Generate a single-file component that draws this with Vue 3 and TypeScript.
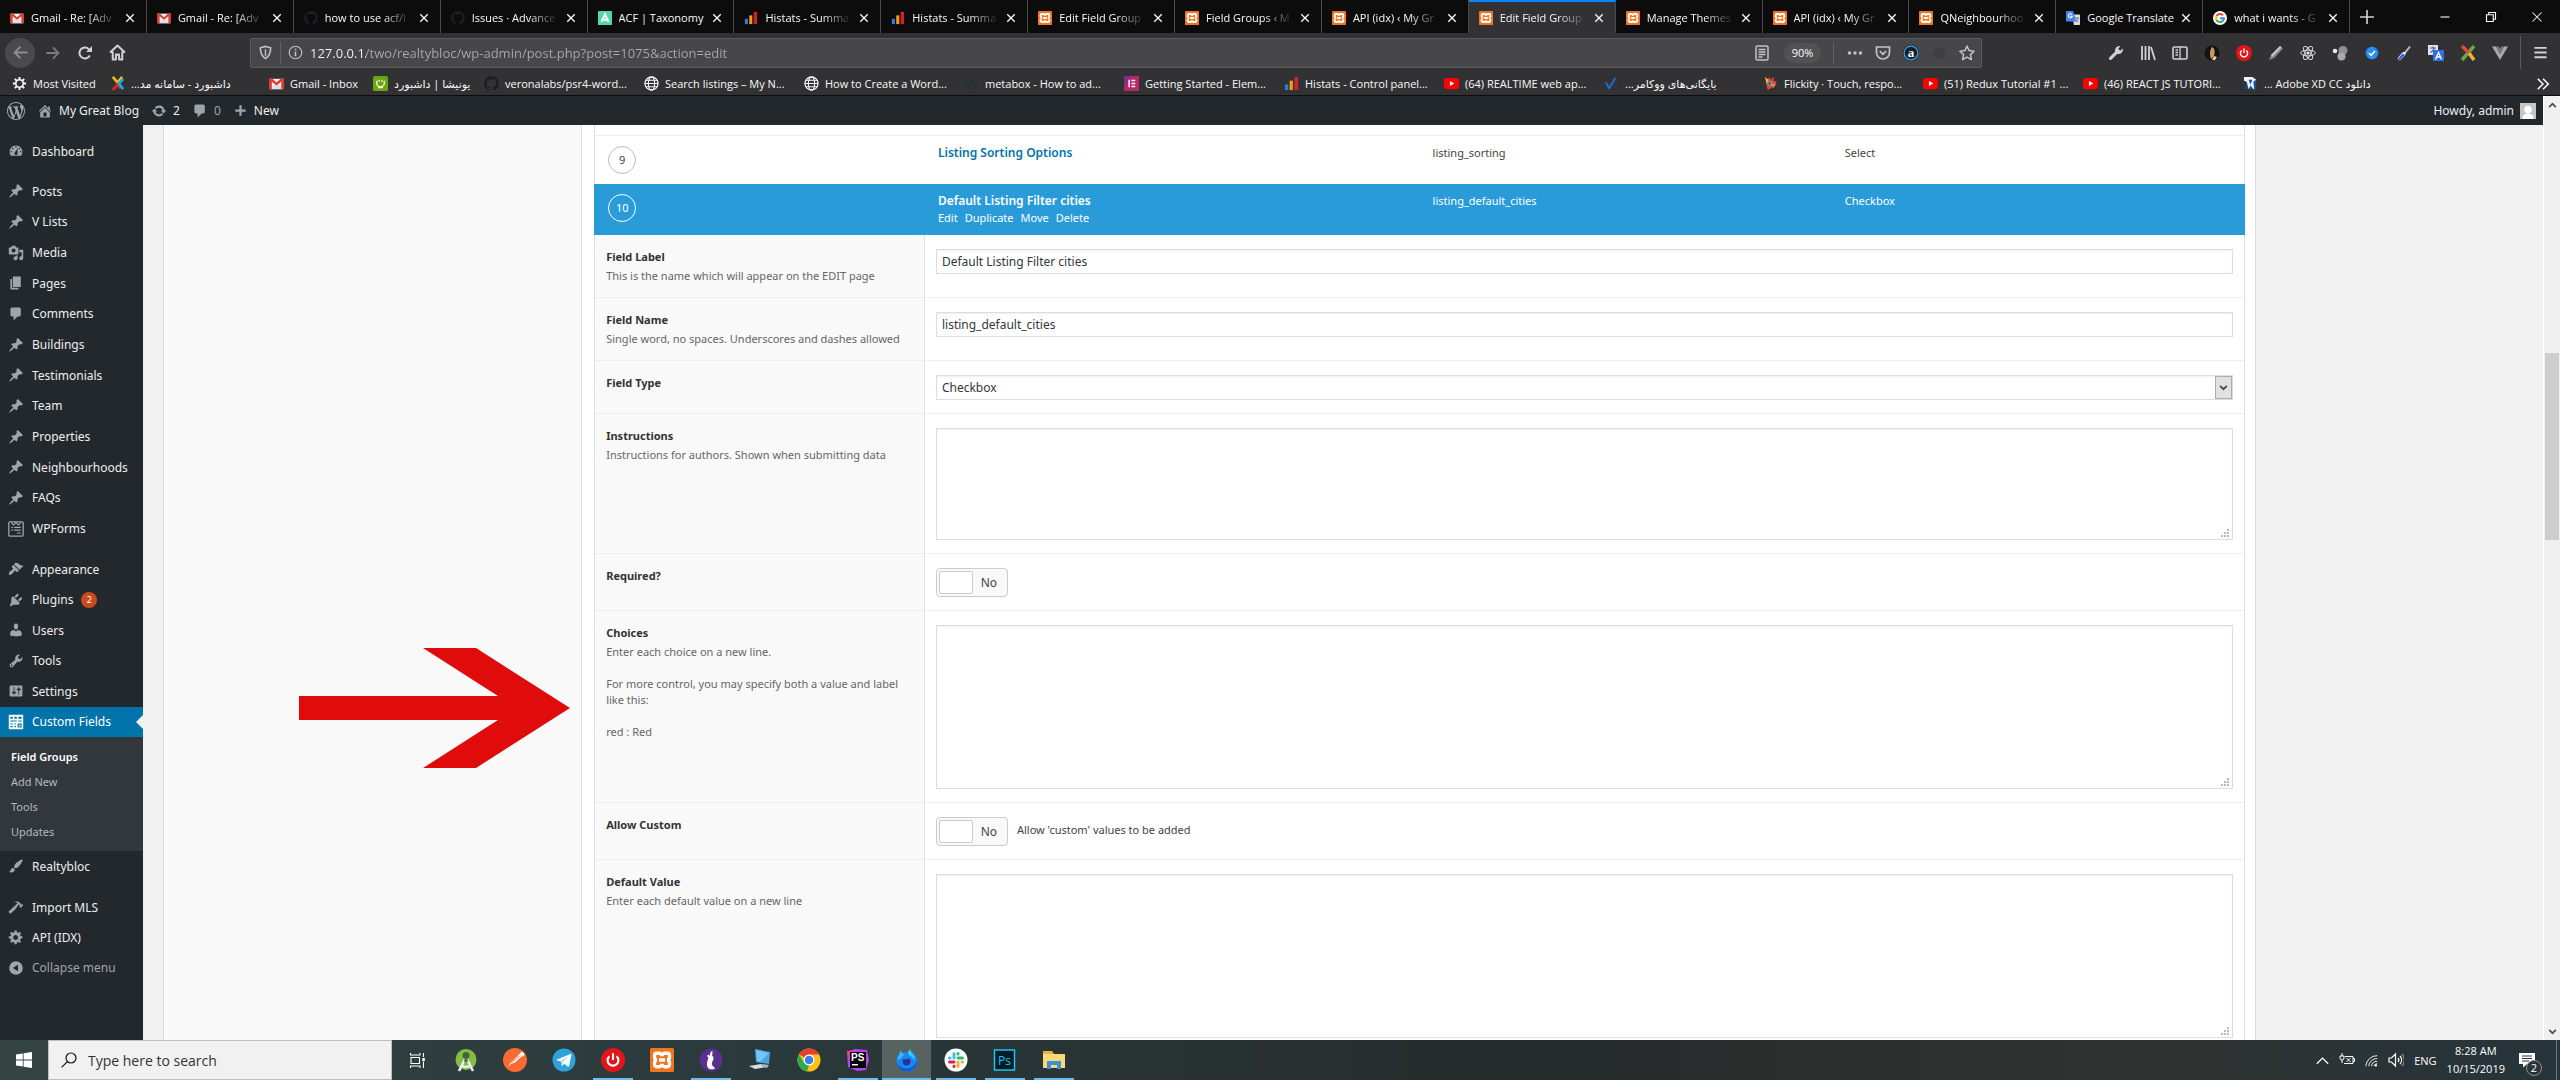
<script setup lang="ts">
import { h, ref } from 'vue'

interface Glyph { box: string; body: string }

const pinPath = 'M10.44 3.02l1.82-1.82 6.36 6.35-1.83 1.82c-1.05-.68-2.48-.57-3.41.36l-.75.75c-.92.93-1.04 2.35-.35 3.41l-1.83 1.82-2.41-2.41-2.8 2.79c-.42.42-3.38 2.71-3.8 2.29s1.86-3.39 2.28-3.81l2.79-2.79L4.1 9.36l1.83-1.82c1.05.69 2.48.57 3.4-.36l.75-.75c.93-.92 1.05-2.35.36-3.41z'
const cur = 'fill="currentColor"'
const line = (w: number, color = 'currentColor') => `fill="none" stroke="${color}" stroke-width="${w}"`
const dash = (d: string): Glyph => ({ box: '0 0 20 20', body: `<path ${cur} fill-rule="evenodd" d="${d}"/>` })
const g16 = (body: string): Glyph => ({ box: '0 0 16 16', body })
const g24 = (body: string): Glyph => ({ box: '0 0 24 24', body })

const icons: Record<string, Glyph> = {
  // admin menu
  pin: dash(pinPath),
  dashboard: dash('M3.76 16h12.48c1.1-1.37 1.76-3.11 1.76-5 0-4.42-3.58-8-8-8s-8 3.58-8 8c0 1.89.66 3.63 1.76 5zM10 4c.55 0 1 .45 1 1s-.45 1-1 1-1-.45-1-1 .45-1 1-1zM6 6c.55 0 1 .45 1 1s-.45 1-1 1-1-.45-1-1 .45-1 1-1zm8 0c.55 0 1 .45 1 1s-.45 1-1 1-1-.45-1-1 .45-1 1-1zm-5.37 5.55L12 7v6c0 1.1-.9 2-2 2s-2-.9-2-2c0-.57.24-1.08.63-1.45zM4 10c.55 0 1 .45 1 1s-.45 1-1 1-1-.45-1-1 .45-1 1-1zm12 0c.55 0 1 .45 1 1s-.45 1-1 1-1-.45-1-1 .45-1 1-1z'),
  media: dash('M13 11V4c0-.55-.45-1-1-1h-1.67L9 1H5L3.67 3H2c-.55 0-1 .45-1 1v7c0 .55.45 1 1 1h10c.55 0 1-.45 1-1zM7 4.5c1.38 0 2.5 1.12 2.5 2.5S8.38 9.5 7 9.5 4.5 8.38 4.5 7 5.62 4.5 7 4.5zM14 6h5v10.5c0 1.38-1.12 2.5-2.5 2.5S14 17.88 14 16.5s1.12-2.5 2.5-2.5c.17 0 .34.02.5.05V9h-3V6zm-4 8.05V13h2v3.5c0 1.38-1.12 2.5-2.5 2.5S7 17.88 7 16.5 8.12 14 9.5 14c.17 0 .34.02.5.05z'),
  page: dash('M6 15V2h10v13H6zm-1 1h8v2H3V5h2v11z'),
  comment: dash('M5 2h9c1.1 0 2 .9 2 2v7c0 1.1-.9 2-2 2h-2l-5 5v-5H5c-1.1 0-2-.9-2-2V4c0-1.1.9-2 2-2z'),
  forms: { box: '0 0 20 20', body: `<rect x="1" y="1" width="18" height="18" rx="1.5" ${line(1.6)}/><path ${line(1.5)} d="M4 2l3 3 3-3 3 3 3-3M4 8h2M7.500 8H16M4 11.500h2M7.500 11.500H16M11 15h5"/>` },
  appearance: dash('M14.48 11.06L7.41 3.99l1.5-1.5c.5-.56 2.3-.47 3.51.32 1.21.8 1.43 1.28 2.91 2.1 1.18.64 2.45 1.26 4.45.85zm-.71.71L6.7 4.7 4.93 6.47c-.39.39-.39 1.02 0 1.41l1.06 1.06c.39.39.39 1.03 0 1.42-.6.6-1.43 1.11-2.21 1.69-.35.26-.7.53-1.01.84C1.43 14.23.4 16.08 1.4 17.07c.99 1 2.84-.03 4.18-1.36.31-.31.58-.66.85-1.02.57-.78 1.08-1.61 1.69-2.21.39-.39 1.02-.39 1.41 0l1.06 1.06c.39.39 1.02.39 1.41 0z'),
  plugins: dash('M13.11 4.36L9.87 7.6 8 5.73l3.24-3.24c.35-.34 1.05-.2 1.56.32.52.51.66 1.21.31 1.55zm-8 1.77l.91-1.12 9.01 9.01-1.19.84c-.71.71-2.63 1.16-3.82 1.16H6.14L4.9 17.26c-.59.59-1.54.59-2.12 0-.59-.58-.59-1.53 0-2.12l1.24-1.24v-3.88c0-1.13.4-3.19 1.09-3.89zm7.26 3.97l3.24-3.24c.34-.35 1.04-.21 1.55.31.52.51.66 1.21.31 1.55l-3.24 3.25z'),
  users: dash('M10 9.25c-2.27 0-2.73-3.44-2.73-3.44C7 4.02 7.82 2 9.97 2c2.16 0 2.98 2.02 2.71 3.81 0 0-.41 3.44-2.68 3.44zm0 2.57L12.72 10c2.39 0 4.52 2.33 4.52 4.53v2.49s-3.65 1.13-7.24 1.13c-3.65 0-7.24-1.13-7.24-1.13v-2.49c0-2.25 1.94-4.48 4.47-4.48z'),
  tools: dash('M16.68 9.77c-1.34 1.34-3.3 1.67-4.95.99l-5.41 6.52c-.99.99-2.59.99-3.58 0s-.99-2.59 0-3.57l6.52-5.42c-.68-1.65-.35-3.61.99-4.95 1.28-1.28 3.12-1.62 4.72-1.06l-2.89 2.89 2.82 2.82 2.86-2.87c.53 1.58.18 3.39-1.08 4.65zM3.81 16.21c.4.39 1.04.39 1.43 0 .4-.4.4-1.04 0-1.43-.39-.4-1.03-.4-1.43 0-.39.39-.39 1.03 0 1.43z'),
  settings: dash('M18 16V4c0-.55-.45-1-1-1H3c-.55 0-1 .45-1 1v12c0 .55.45 1 1 1h14c.55 0 1-.45 1-1zM8 11h1c.55 0 1 .45 1 1s-.45 1-1 1H8v1.5c0 .28-.22.5-.5.5s-.5-.22-.5-.5V13H6c-.55 0-1-.45-1-1s.45-1 1-1h1V5.5c0-.28.22-.5.5-.5s.5.22.5.5V11zm5-2h-1c-.55 0-1-.45-1-1s.45-1 1-1h1V5.5c0-.28.22-.5.5-.5s.5.22.5.5V7h1c.55 0 1 .45 1 1s-.45 1-1 1h-1v5.5c0 .28-.22.5-.5.5s-.5-.22-.5-.5V9z'),
  fields: { box: '0 0 20 20', body: `<path ${cur} fill-rule="evenodd" d="M1 1h18v18H1zM3 3.500h3V6H3zm5 0h3V6H8zm5 0h4V6h-4zM3 8h8v1.500H3zm10 0h4v1.500h-4zM3 12h3v1H3zm5 0h2v1H8zm4 0h5v5h-5zm1.500 1.500v2h2v-2zM3 15h3v1.500H3zm5 0h2v1.500H8z"/>` },
  brush: dash('M18.33 3.57s.27-.8-.31-1.36c-.53-.52-1.22-.24-1.22-.24-.61.3-5.76 3.47-7.67 5.57-.86.96-2.06 3.79-1.09 4.82.92.98 3.96-.17 4.79-1 2.06-2.06 5.21-7.17 5.5-7.79zM1.4 17.65c2.37-1.56 1.46-3.41 3.23-4.64.93-.65 2.22-.62 3.08.29.63.67.8 2.57-.16 3.46-1.57 1.45-4 1.55-6.15.89z'),
  hammer: dash('M17.7 6.32l1.41 1.42-3.47 3.41-1.42-1.42.84-.82c-.32-.76-.81-1.57-1.51-2.31l-4.61 6.59-5.26 4.7c-.39.39-1.02.39-1.42 0l-1.2-1.21c-.39-.39-.39-1.02 0-1.41l10.97-9.92c-1.37-.86-3.21-1.46-5.67-1.48 2.7-.82 4.95-.93 6.58-.3 1.7.66 2.82 2.2 3.91 3.58z'),
  gear: dash('M18 12h-2.18c-.17.7-.44 1.35-.81 1.93l1.54 1.54-2.1 2.1-1.54-1.54c-.58.36-1.23.63-1.91.79V19H8v-2.18c-.68-.16-1.33-.43-1.91-.79l-1.54 1.54-2.12-2.12 1.54-1.54c-.36-.58-.63-1.23-.79-1.91H1V9.03h2.17c.16-.7.44-1.35.8-1.94L2.43 5.55l2.1-2.1 1.54 1.54c.58-.37 1.24-.64 1.93-.81V2h3v2.18c.68.16 1.33.43 1.91.79l1.54-1.54 2.12 2.12-1.54 1.54c.36.59.64 1.24.8 1.94H18V12zm-8.5 1.5c1.66 0 3-1.34 3-3s-1.34-3-3-3-3 1.34-3 3 1.34 3 3 3z'),
  collapse: dash('M10 1.500a8.500 8.500 0 1 1 0 17a8.500 8.500 0 0 1 0-17zM12.500 14V6L6 10z'),
  home: dash('M16 8.5l1.53 1.53-1.06 1.06L10 4.6l-6.47 6.49-1.06-1.06L10 2.5l4 4v-2h2v4zm-6-2.46l6 5.99V18H4v-5.97zM12 17v-5H8v5h4z'),
  update: dash('M10.2 3.28c3.53 0 6.43 2.61 6.92 6h2.08l-3.5 4-3.5-4h2.32c-.45-1.97-2.21-3.45-4.32-3.45-1.45 0-2.73.71-3.54 1.78L4.95 5.66C6.23 4.2 8.11 3.28 10.2 3.28zm-.4 13.44c-3.52 0-6.43-2.61-6.92-6H.8l3.5-4c1.17 1.33 2.33 2.67 3.5 4H5.48c.45 1.97 2.21 3.45 4.32 3.45 1.45 0 2.73-.71 3.54-1.78l1.71 1.95c-1.28 1.46-3.15 2.38-5.25 2.38z'),
  plus: dash('M17 8.500v3h-5.500V17h-3v-5.500H3v-3h5.500V3h3v5.500z'),
  wordpress: dash('M20 10c0-5.51-4.49-10-10-10C4.48 0 0 4.49 0 10c0 5.52 4.48 10 10 10 5.51 0 10-4.48 10-10zM7.78 15.37L4.37 6.22c.55-.02 1.17-.08 1.17-.08.5-.06.44-1.13-.06-1.11 0 0-1.45.11-2.37.11-.18 0-.37 0-.58-.01C4.12 2.69 6.87 1.11 10 1.11c2.33 0 4.45.87 6.05 2.34-.68-.11-1.65.39-1.65 1.58 0 .74.45 1.36.9 2.1.35.61.55 1.36.55 2.46 0 1.49-1.4 5-1.4 5l-3.03-8.37c.54-.02.82-.17.82-.17.5-.05.44-1.25-.06-1.22 0 0-1.44.12-2.38.12-.87 0-2.33-.12-2.33-.12-.5-.03-.56 1.2-.06 1.22l.92.08 1.26 3.41zM17.41 10c.24-.64.74-1.87.43-4.25.7 1.29 1.05 2.71 1.05 4.25 0 3.29-1.73 6.24-4.4 7.78.97-2.59 1.94-5.2 2.92-7.78zM6.1 18.09C3.12 16.65 1.11 13.53 1.11 10c0-1.3.23-2.48.72-3.59C3.25 10.3 4.67 14.2 6.1 18.09zm4.03-6.63l2.58 6.98c-.86.29-1.76.45-2.71.45-.79 0-1.57-.11-2.29-.33.81-2.38 1.62-4.74 2.42-7.1z'),
  avatar: g16(`<rect width="16" height="16" fill="#c5c5c5"/><circle cx="8" cy="6.500" r="3.800" fill="#fff"/><path fill="#fff" d="M2.500 16c0-4 2-5.500 5.500-5.500s5.500 1.500 5.500 5.500z"/>`),

  // site icons
  gmail: g16(`<path fill="#f2f2f2" d="M1 3h14v11H1z"/><path fill="#dfdfdf" d="M1 14l7-6 7 6z"/><path fill="#d93f33" d="M1 2.500h2L8 7l5-4.500h2a1 1 0 0 1 1 1V14h-3V6l-5 4-5-4v8H0V3.500a1 1 0 0 1 1-1z"/>`),
  github: g16(`<path fill="#1b1f23" d="M8 0a8 8 0 0 0-2.500 15.600c.4.100.500-.2.500-.4v-1.500c-2.200.5-2.700-1-2.700-1-.4-.9-.9-1.200-.9-1.200-.7-.5.1-.5.1-.5.8.1 1.200.8 1.200.8.7 1.200 1.900.9 2.300.7.100-.5.300-.9.500-1.100-1.800-.2-3.600-.9-3.600-4 0-.9.300-1.600.8-2.100-.1-.2-.4-1 .1-2.100 0 0 .7-.2 2.200.8a7.600 7.600 0 0 1 4 0c1.500-1 2.200-.8 2.200-.8.4 1.100.2 1.900.1 2.100.5.6.8 1.300.8 2.100 0 3.100-1.900 3.800-3.600 4 .3.300.500.8.500 1.500v2.200c0 .2.100.500.500.4A8 8 0 0 0 8 0z"/>`),
  acf: g16(`<rect width="16" height="16" rx="1" fill="#4fd8a9"/><path fill="none" stroke="#fff" stroke-width="2.200" d="M4 12.500L8 3.500l4 9M5.500 10h5"/>`),
  histats: g16(`<rect x="1" y="9" width="3.500" height="6" fill="#2f7de0"/><rect x="6" y="5" width="3.500" height="10" fill="#f29b1d"/><rect x="11" y="1" width="4" height="14" fill="#c9252b"/>`),
  xampp: g16(`<rect width="16" height="16" rx="1" fill="#ef7521"/><path ${line(2.200, '#fff')} d="M4.500 3.500h1.500a2 2 0 0 1 2 2 2 2 0 0 1 2-2h1.500a1.500 1.500 0 0 1 1.500 1.500v1a2 2 0 0 1-1.500 2 2 2 0 0 1 1.500 2v1a1.500 1.500 0 0 1-1.500 1.500H10a2 2 0 0 1-2-2 2 2 0 0 1-2 2H4.500A1.500 1.500 0 0 1 3 11v-1a2 2 0 0 1 1.500-2A2 2 0 0 1 3 6V5a1.500 1.500 0 0 1 1.500-1.500zM6 8h4"/>`),
  translate: g16(`<path fill="#dcdcdc" d="M7 4h8a1 1 0 0 1 1 1v10a1 1 0 0 1-1 1H9z"/><path fill="#4285f4" d="M1 0h7l4 12H1a1 1 0 0 1-1-1V1a1 1 0 0 1 1-1z"/><path ${line(1.200, '#fff')} d="M6.800 4a2.300 2.300 0 1 0 .5 2H5"/><path ${line(1, '#6d7f86')} d="M10 8h5M12.500 7v1M14 8c-.5 2-2 3.500-3.500 4.500M11 9.500c.8 1.500 2 2.500 3.500 3"/>`),
  google: g16(`<circle cx="8" cy="8" r="8" fill="#fff"/><g fill="none" stroke-width="2.200"><path stroke="#ea4335" d="M11.500 5A4.600 4.600 0 0 0 4 5.800"/><path stroke="#fbbc05" d="M4 5.800a4.600 4.600 0 0 0 0 4.400"/><path stroke="#34a853" d="M4 10.200a4.600 4.600 0 0 0 7 1.200"/><path stroke="#4285f4" d="M11 11.400A4.500 4.500 0 0 0 12.600 8.200H8"/></g>`),
  cog: g16(`<circle cx="8" cy="8" r="4" ${line(1.800)}/><path ${line(2)} d="M8 1v3M8 12v3M1 8h3M12 8h3M3 3l2.200 2.200M10.800 10.800L13 13M13 3l-2.200 2.200M5.200 10.800L3 13"/>`),
  xmark: g16(`<path ${line(2.800, '#f6b91c')} d="M3 1l5 6 5-6"/><path ${line(2.800, '#e0242c')} d="M3 15l5-6 3 4"/><path ${line(2.800, '#22a7e0')} d="M14 3L9.500 8l4.500 6"/>`),
  unisha: g16(`<rect width="16" height="16" rx="2" fill="#6ba50f"/><path ${line(1.300, '#fff')} d="M4 5v3a4 3.500 0 0 0 8 0V5M6.500 4v2M9.500 4v2M5.500 12.500h5"/>`),
  globe: g16(`<circle cx="8" cy="8" r="7" ${line(1.300)}/><ellipse cx="8" cy="8" rx="3.300" ry="7" ${line(1.200)}/><path ${line(1.200)} d="M1 8h14M2 4.500h12M2 11.500h12"/>`),
  wdark: g16(`<path ${line(1.500, '#24303c')} d="M2 4l3 9 3-8 3 8 3-9"/>`),
  elementor: g16(`<rect width="16" height="16" fill="#b5296c"/><path fill="#7b2d8b" d="M0 0h7L0 12z"/><path stroke="#fff" stroke-width="1.500" d="M5.500 4v8M8 4.800h4M8 8h4M8 11.200h4"/>`),
  youtube: g16(`<rect y="2" width="16" height="12" rx="3" fill="#f00"/><path fill="#fff" d="M6.300 5.300v5.400L11 8z"/>`),
  tick: g16(`<path ${line(2, '#1c6fd6')} d="M2 7l3.500 6L12 2"/><path ${line(1.500, '#1c3c66')} d="M10 13a5 5 0 0 0 4-6"/>`),
  flickity: g16(`<path fill="#e8433b" d="M3 6l4-5 1 3 4-3-1 4 4 1-5 6-5 3z"/><path fill="#f7b52c" d="M2 1l4 3-2 5z"/><circle cx="7.500" cy="8" r="2.500" fill="#3fb6c9"/><circle cx="7" cy="8" r="1" fill="#222"/><path fill="#f7902c" d="M9 9l5-1-3 5z"/>`),
  adobe: g16(`<path fill="#17508f" d="M3 3h11v11H3z"/><path fill="#eaf2fb" d="M1 1h9l4 3-3 2 1 9-4-5-2 4-2-8-3-1z"/><path fill="#17508f" d="M6 4h4L8 9z"/>`),

  // browser chrome
  back: g16(`<path ${line(1.800)} stroke-linecap="round" d="M14 8H2.500M7.500 3l-5 5 5 5"/>`),
  forward: g16(`<path ${line(1.800)} stroke-linecap="round" d="M2 8h11.500M8.500 3l5 5-5 5"/>`),
  reload: g16(`<path ${line(2)} d="M12.800 10.500A5.500 5.500 0 1 1 12 4.300"/><path ${cur} d="M15 1v6H9z"/>`),
  house: g16(`<path ${line(1.900)} stroke-linejoin="round" d="M1 8l7-6.500L15 8M3.500 7v7.500h3V10h3v4.500h3V7"/>`),
  shield: g16(`<path ${line(1.700)} d="M8 1.500l5.500 1.500c0 6-1.500 9-5.500 11.500C4 12 2.500 9 2.500 3z"/><path ${line(1.500)} d="M8 4.500c0 3 0 5 0 7"/>`),
  info: g16(`<circle cx="8" cy="8" r="6.700" ${line(1.200)}/><path ${line(1.700)} d="M8 7v5M8 4v1.700"/>`),
  reader: g16(`<rect x="2" y="1" width="12" height="14" rx="1.500" ${line(1.500)}/><path ${line(1.300)} d="M4.500 4.500h7M4.500 7h7M4.500 9.500h7M4.500 12h4"/>`),
  dots: g16(`<g ${cur}><circle cx="2.500" cy="8" r="1.700"/><circle cx="8" cy="8" r="1.700"/><circle cx="13.500" cy="8" r="1.700"/></g>`),
  pocket: g16(`<path ${line(1.700)} d="M1.500 2h13v5.500a6.500 6.500 0 0 1-13 0z"/><path ${line(1.700)} d="M4.700 6L8 9.200 11.300 6"/>`),
  amark: g16(`<circle cx="8" cy="8" r="8" fill="#15202c"/><circle cx="8" cy="8" r="6.900" ${line(1.300, '#3fa2e8')}/><text x="8" y="12" text-anchor="middle" font-family="Liberation Serif, serif" font-weight="700" font-size="13" fill="#fff">a</text>`),
  blob: g16(`<circle cx="8" cy="8" r="6" fill="#404044"/>`),
  star: g16(`<path ${line(1.500)} stroke-linejoin="round" d="M8 1l2.100 4.600 5 .6-3.700 3.400 1 5L8 12.100l-4.400 2.500 1-5L.900 6.200l5-.6z"/>`),
  wrench: g16(`<path ${cur} d="M14.800 3.600l-2.600 2.200-2-2L12.400 1.200A4.300 4.300 0 0 0 7.200 6.500L1.200 12.600a1.600 1.600 0 0 0 2.200 2.200l6-6a4.300 4.300 0 0 0 5.400-5.200z"/>`),
  library: g16(`<path ${line(1.800)} d="M2 1v14M5.500 1v14M9 1v14M11 2l4 13"/>`),
  panel: g16(`<rect x="1" y="2" width="14" height="12" rx="1.500" ${line(1.600)}/><path ${line(1.300)} d="M8 2v12M3.500 5h2.500M3.500 7.500h2.500M3.500 10h2.500"/>`),
  face: g16(`<circle cx="8" cy="8" r="7.500" fill="#15120f"/><path fill="#c79a67" d="M8 2c3 1 3 5 2 9l-3 3c-1-3-2-8 1-12z"/><path fill="#e5d3b0" d="M10 11l3 1-2 3-3 0z"/>`),
  power: g16(`<circle cx="8" cy="8" r="8" fill="#e3151b"/><path ${line(1.400, '#fff')} d="M5.600 5.500a3.600 3.600 0 1 0 4.800 0M8 3.500V8"/>`),
  pen: g16(`<path fill="#8b8b8b" d="M1 15l2-5L12 1l3 2.500L6 13z"/><path fill="#c9c9c9" d="M3 10L12 1l1.500 1.200L4.500 11.500z"/>`),
  react: g16(`<g ${line(1, '#d6d6d6')}><ellipse cx="8" cy="8" rx="7.300" ry="2.900"/><ellipse cx="8" cy="8" rx="7.300" ry="2.900" transform="rotate(60 8 8)"/><ellipse cx="8" cy="8" rx="7.300" ry="2.900" transform="rotate(120 8 8)"/></g><circle cx="8" cy="8" r="1.600" fill="#eee"/>`),
  spheres: g16(`<circle cx="11" cy="5.500" r="4.500" fill="#8f8f8f"/><circle cx="9.500" cy="11.500" r="4" fill="#aaa"/><circle cx="3" cy="6" r="2.300" fill="#e6e6e6"/>`),
  badge: g16(`<circle cx="8" cy="8" r="6.300" fill="#2b8df0"/><rect x="3" y="3" width="10" height="10" rx="2" fill="#2b8df0" transform="rotate(45 8 8)"/><path ${line(1.500, '#fff')} d="M5 8l2.200 2.300L11 6"/>`),
  dropper: g16(`<path stroke="#bdbdbd" stroke-width="2" d="M8 9l6-7.500"/><path stroke="#e8e8f4" stroke-width="3.500" stroke-linecap="round" d="M8 8.500l-4.500 5"/><path stroke="#3c57e0" stroke-width="2.500" stroke-linecap="round" d="M7 10l-3.500 3.800"/>`),
  gtrans: g16(`<rect width="10" height="10" fill="#dfe3ea"/><rect x="5" y="5" width="11" height="11" fill="#2f6fe4"/><path ${line(1.200, '#3b63b8')} d="M2 3h6M5 1.500V3M6.500 3C6 5 4 6.500 2.500 7.500"/><path ${line(1.300, '#fff')} d="M7.500 14.500l3-7 3 7M8.500 12h4"/>`),
  crossx: g16(`<path stroke="#6aa93a" stroke-width="3.500" d="M2 15L14 1"/><path stroke="#e04a35" stroke-width="3.500" d="M2 1l8 8"/><path stroke="#e9b23a" stroke-width="3.500" d="M9 8l5 7"/>`),
  vue: g16(`<path fill="#a9a9a9" d="M0 1.500h4L8 9l4-7.500h4L8 15z"/><path fill="#7b7b7b" d="M4 1.500h2.500L8 4l1.500-2.500H12L8 9z"/>`),
  menu: g16(`<path ${line(2)} d="M1.500 3h13M1.500 8h13M1.500 13h13"/>`),
  chevrons: g16(`<path ${line(1.800)} d="M2 2l6 6-6 6M8 2l6 6-6 6"/>`),
  close: g16(`<path ${line(2.200)} d="M2 2l12 12M14 2L2 14"/>`),
  add: g16(`<path ${line(1.900)} d="M8 0v16M0 8h16"/>`),
  minimize: g16(`<path ${line(1.500)} d="M2 8h12"/>`),
  restore: g16(`<path ${line(1.500)} d="M2 5h9v9H2zM5 5V2h9v9h-3"/>`),
  shut: g16(`<path ${line(1.400)} d="M2 2l12 12M14 2L2 14"/>`),
  up: g16(`<path ${line(3)} d="M2 11l6-6 6 6"/>`),
  down: g16(`<path ${line(3)} d="M2 5l6 6 6-6"/>`),

  // taskbar
  windows: g16(`<path fill="#fff" d="M0 2.400l6.800-1v6.200H0zM7.600 1.300L16 0v7.600H7.600zM0 8.400h6.800v6.200L0 13.600zM7.600 8.400H16V16l-8.400-1.300z"/>`),
  search: g16(`<circle cx="10" cy="6" r="5" ${line(1.200)}/><path ${line(1.200)} d="M6.400 9.600L.600 15.400"/>`),
  taskview: g16(`<path ${line(1.100)} d="M2 5.500h8.500v6H2zM1.500 1v2h9.500V1M1.500 16v-2h9.500v2M14.500 1v4M14.500 9.500V16"/><rect x="13.300" y="6" width="2.500" height="3" ${cur}/>`),
  studio: g24(`<circle cx="12" cy="11.500" r="10.500" fill="#84bd41"/><circle cx="12" cy="7.500" r="3.500" fill="#44643a"/><path ${line(2.500, '#eceff1')} d="M11 11L5 23M13 11l6 12M7.500 17.500a8 8 0 0 0 9 0"/><circle cx="12" cy="12.500" r="2" fill="#5c6f5a"/>`),
  postman: g24(`<circle cx="12" cy="12" r="12" fill="#fb6a32"/><path fill="#fff" d="M17 5.500a2.200 2.200 0 1 1 1.500 3l-6.500 6-4 1.500-3 3 2.500-4.500z"/><path stroke="#fb6a32" d="M8 15l8-7"/>`),
  telegram: g24(`<circle cx="12" cy="12" r="11.500" fill="#2ea2dc"/><path fill="#fff" d="M4.500 11.800L18.500 6c.7-.3 1 .2.900.9l-2.300 11c-.2.800-.8.900-1.400.5l-3.500-2.600-1.700 1.800c-.5.500-.9.300-.9-.2l-.5-4-4.400-1.100z"/><path fill="#b6d9ee" d="M9.200 12.500L17 8l-6 6-.5 3.500z"/>`),
  tor: g24(`<circle cx="12" cy="12" r="11.500" fill="#59308f"/><path fill="#fff" d="M13.500 2.500c-.5 2 .5 3-.5 5 4 3-1 6 0 9 .4 2 2.500 2.500 3 4-4 2-8.500.5-8-5 .3-4 2-5 1-8 .5 0 1 .7 2 .5-.5-2 .5-4.500 2.500-5.500z"/><circle cx="9.500" cy="8" r="1.200" fill="#fff"/>`),
  computer: g24(`<path fill="#4aa3e8" d="M7 1l15 3-1 12-13-2z"/><path fill="#79c4f6" d="M8 2l13 3-9 9-3-1z"/><path fill="#d7dde2" d="M1 18l12-2 6 3-12 2z"/><path fill="#aab3ba" d="M15 16l6 1-2 3-6-2z"/>`),
  chrome: g24(`<circle cx="12" cy="12" r="11.500" fill="#fbc117"/><path fill="#e23f33" d="M12 12L2 6.300A11.500 11.500 0 0 1 22 6.500H12z"/><path fill="#2da94f" d="M2 6.300L7.300 15l4.700 2-2 6.300A11.500 11.500 0 0 1 2 6.300z"/><circle cx="12" cy="12" r="5.500" fill="#fff"/><circle cx="12" cy="12" r="4.300" fill="#3f7de8"/>`),
  phpstorm: g24(`<path fill="#b345f1" d="M1 4l8-3 12 1 2 10-3 10-9 1-9-4z"/><path fill="#f13a97" d="M1 3l7-1-5 10z"/><rect x="4" y="4" width="16" height="16" fill="#000"/><text x="5" y="12.500" font-family="Liberation Sans, sans-serif" font-weight="700" font-size="10" fill="#fff">PS</text><path fill="#fff" d="M6 16h6v1.500H6z"/>`),
  firefox: g24(`<path fill="#1b86f2" d="M12 4c2-3 3-1 4 0 1-1 2 0 2.500 1.500C21.500 8 22.500 10 22.500 13a10.500 10.500 0 0 1-21 0c0-3 .5-5 2-7l.5 1.500C4.500 6 5 4 5 3c1 .5 2 1.500 2.500 2.500C9 4.500 10.500 4 12 4z"/><path fill="#39c8f8" d="M15.500 1c-.5 2 1 3 2.500 5 2 2.500 2 5 1 7-.5-3-2.500-5-5-5.500C12.500 5 13.500 2.500 15.500 1z"/><path fill="#38b9f6" d="M5 3c1 .5 2 1.500 2.500 2.500 1 0 2 .3 3 1-2 .5-3.500 1.500-4 3.500L3 12c-.5-2 0-3.500 1-4.500C4.500 6 5 4 5 3z"/><path fill="#27348b" d="M8 11.500c1-1 2.500.5 4-.5 1.500-.8 3 0 3.500 2 .3 2.500-1.500 4.500-4 4.500-2.800 0-4.500-2.500-3.500-6z"/><path fill="#1059dc" d="M2 15c2 3 5 5.500 9 5.500 5 0 9-3 11-8 .5 6-4.500 11-10.500 11C7 23.500 3 20 2 15z"/>`),
  slack: g24(`<circle cx="12" cy="12" r="11.500" fill="#fff"/><g stroke-width="3" stroke-linecap="round"><path stroke="#36c5f0" d="M10 5.500V10M5.500 10H6"/><path stroke="#2eb67d" d="M14 10h4.500M14 5.500V6"/><path stroke="#ecb22e" d="M14 14v4.500M18.500 14H18"/><path stroke="#e01e5a" d="M10 14H5.500M10 18.500V18"/></g>`),
  photoshop: g24(`<rect x="1.500" y="2" width="20" height="20" fill="#001d26" stroke="#1cc4f2" stroke-width="1.500"/><text x="11.500" y="16.500" text-anchor="middle" font-family="Open Sans, sans-serif" font-size="12" fill="#1cc4f2">Ps</text>`),
  folder: g24(`<path fill="#e9b440" d="M1 3h9l2 3h11v3H1z"/><path fill="#fbd974" d="M1 6h22v14H1z"/><path fill="#3d8fd8" d="M5 13h14v8h-4v-4H9v4H5z"/>`),
  chevup: g16(`<path ${line(1.500)} d="M1 12l7-7 7 7"/>`),
  battery: g16(`<path ${line(1)} d="M6 4.500h8v7H5M14 6.500h1.500v3H14M3 1v3M1 4h4v2a2 2 0 0 1-4 0zM3 8v3"/><path ${line(1)} d="M7.500 6l4 4M11.500 6l-4 4"/>`),
  wifi: g16(`<g ${line(1.100)}><path d="M1 15A14 14 0 0 1 15 2"/><path d="M4.500 15A10.500 10.500 0 0 1 15 5.500"/><path d="M8 15a7 7 0 0 1 7-6"/><path d="M11 15a4 4 0 0 1 4-3"/></g><circle cx="13.500" cy="14" r="1.300" ${cur}/>`),
  volume: g16(`<path ${line(1.200)} d="M1 6h2.500L7.500 2v12L3.500 10H1zM10 6a3 3 0 0 1 0 4M12 4a6 6 0 0 1 0 8"/><path ${line(1.200, '#7e8a8e')} d="M14 2a9 9 0 0 1 0 12"/>`),
  notes: g16(`<path fill="#fff" d="M0 1h16v11H8l-4 3.500V12H0z"/><path stroke="#26343a" stroke-width="1.200" d="M3 4h10M3 6.500h10M3 9h7"/>`)
}

// Renders one entry of the icon set as an inline SVG
const Icon = (props: { name: string; size?: number }) =>
  h('svg', {
    viewBox: icons[props.name].box,
    width: props.size ?? 16,
    height: props.size ?? 16,
    'aria-hidden': 'true',
    innerHTML: icons[props.name].body
  })
Icon.props = ['name', 'size']

const tabs = [
  { icon: 'gmail', title: 'Gmail - Re: [Adv', fade: true },
  { icon: 'gmail', title: 'Gmail - Re: [Adv', fade: true },
  { icon: 'github', title: 'how to use acf/l', fade: true },
  { icon: 'github', title: 'Issues · Advance', fade: true },
  { icon: 'acf', title: 'ACF | Taxonomy', fade: false },
  { icon: 'histats', title: 'Histats - Summa', fade: true },
  { icon: 'histats', title: 'Histats - Summa', fade: true },
  { icon: 'xampp', title: 'Edit Field Group', fade: true },
  { icon: 'xampp', title: 'Field Groups ‹ M', fade: true },
  { icon: 'xampp', title: 'API (idx) ‹ My Gr', fade: true },
  { icon: 'xampp', title: 'Edit Field Group', fade: true, active: true },
  { icon: 'xampp', title: 'Manage Themes', fade: true },
  { icon: 'xampp', title: 'API (idx) ‹ My Gr', fade: true },
  { icon: 'xampp', title: 'QNeighbourhoo', fade: true },
  { icon: 'translate', title: 'Google Translate', fade: false },
  { icon: 'google', title: 'what i wants - G', fade: true }
]

const bookmarks = [
  { icon: 'cog', title: 'Most Visited', width: 98 },
  { icon: 'xmark', title: 'داشبورد - سامانه مد...', width: 159, rtl: true },
  { icon: 'gmail', title: 'Gmail - Inbox', width: 104 },
  { icon: 'unisha', title: 'یونیشا | داشبورد', width: 111, rtl: true },
  { icon: 'github', title: 'veronalabs/psr4-word...', width: 160 },
  { icon: 'globe', title: 'Search listings – My N...', width: 160 },
  { icon: 'globe', title: 'How to Create a Word...', width: 160 },
  { icon: 'wdark', title: 'metabox - How to ad...', width: 160 },
  { icon: 'elementor', title: 'Getting Started - Elem...', width: 160 },
  { icon: 'histats', title: 'Histats - Control panel...', width: 160 },
  { icon: 'youtube', title: '(64) REALTIME web ap...', width: 160 },
  { icon: 'tick', title: 'بایگانی‌های ووکامر...', width: 159, rtl: true },
  { icon: 'flickity', title: 'Flickity · Touch, respo...', width: 160 },
  { icon: 'youtube', title: '(51) Redux Tutorial #1 ...', width: 160 },
  { icon: 'youtube', title: '(46) REACT JS TUTORI...', width: 160 },
  { icon: 'adobe', title: 'دانلود Adobe XD CC ...', width: 160, rtl: true }
]

const extensions = ['wrench', 'library', 'panel', 'face', 'power', 'pen', 'react', 'spheres', 'badge', 'dropper', 'gtrans', 'crossx', 'vue']

const contentMenu = [
  { icon: 'pin', title: 'Posts' },
  { icon: 'pin', title: 'V Lists' },
  { icon: 'media', title: 'Media' },
  { icon: 'page', title: 'Pages' },
  { icon: 'comment', title: 'Comments' },
  { icon: 'pin', title: 'Buildings' },
  { icon: 'pin', title: 'Testimonials' },
  { icon: 'pin', title: 'Team' },
  { icon: 'pin', title: 'Properties' },
  { icon: 'pin', title: 'Neighbourhoods' },
  { icon: 'pin', title: 'FAQs' },
  { icon: 'forms', title: 'WPForms' }
]
const adminMenu = [
  { icon: 'appearance', title: 'Appearance' },
  { icon: 'plugins', title: 'Plugins', count: 2 },
  { icon: 'users', title: 'Users' },
  { icon: 'tools', title: 'Tools' },
  { icon: 'settings', title: 'Settings' }
]
const submenu = ['Field Groups', 'Add New', 'Tools', 'Updates']

const apps = [
  { icon: 'studio', name: 'Android Studio', state: '' },
  { icon: 'postman', name: 'Postman', state: '' },
  { icon: 'telegram', name: 'Telegram', state: '' },
  { icon: 'power', name: 'Power', state: 'open' },
  { icon: 'xampp', name: 'XAMPP', state: '' },
  { icon: 'tor', name: 'Messenger', state: 'open' },
  { icon: 'computer', name: 'Computer', state: '' },
  { icon: 'chrome', name: 'Chrome', state: '' },
  { icon: 'phpstorm', name: 'PhpStorm', state: 'open' },
  { icon: 'firefox', name: 'Firefox', state: 'focused' },
  { icon: 'slack', name: 'Slack', state: 'open' },
  { icon: 'photoshop', name: 'Photoshop', state: 'open' },
  { icon: 'folder', name: 'File Explorer', state: 'open' }
]

const address = ref('127.0.0.1/two/realtybloc/wp-admin/post.php?post=1075&action=edit')
const fieldLabel = ref('Default Listing Filter cities')
const fieldName = ref('listing_default_cities')
const fieldType = ref('Checkbox')
const instructions = ref('')
const choices = ref('')
const defaultValue = ref('')
const required = ref(false)
const allowCustom = ref(false)
</script>

<template>
  <div class="desktop">
    <header class="browser">
      <div class="tabs">
        <div class="strip">
          <div v-for="(tab, i) in tabs" :key="i" class="tab" :class="{ active: tab.active }">
            <Icon :name="tab.icon" :size="14" />
            <a href="#" :class="{ fade: tab.fade }">{{ tab.title }}</a>
            <button type="button" aria-label="Close tab"><Icon name="close" :size="10" /></button>
          </div>
        </div>
        <button type="button" class="new-tab" aria-label="New tab"><Icon name="add" :size="14" /></button>
        <div class="window-controls">
          <button type="button" aria-label="Minimize"><Icon name="minimize" :size="12" /></button>
          <button type="button" aria-label="Restore"><Icon name="restore" :size="12" /></button>
          <button type="button" aria-label="Close"><Icon name="shut" :size="12" /></button>
        </div>
      </div>

      <div class="toolbar">
        <button type="button" class="back" aria-label="Back"><Icon name="back" :size="17" /></button>
        <button type="button" class="tool dim" aria-label="Forward"><Icon name="forward" :size="16" /></button>
        <button type="button" class="tool" aria-label="Reload"><Icon name="reload" /></button>
        <button type="button" class="tool" aria-label="Home"><Icon name="house" :size="17" /></button>
        <div class="address">
          <Icon name="shield" :size="15" />
          <span class="rule"></span>
          <Icon name="info" :size="15" />
          <input v-model="address" type="text" aria-label="Address" spellcheck="false" />
          <div class="page-actions">
            <button type="button" aria-label="Reader view"><Icon name="reader" /></button>
            <button type="button" class="zoom">90%</button>
            <span class="rule"></span>
            <button type="button" aria-label="Page actions"><Icon name="dots" /></button>
            <button type="button" aria-label="Save to Pocket"><Icon name="pocket" /></button>
            <button type="button" aria-label="Alexa"><Icon name="amark" /></button>
            <button type="button" aria-label="Add-on"><Icon name="blob" /></button>
            <button type="button" aria-label="Bookmark"><Icon name="star" /></button>
          </div>
        </div>
        <div class="extensions">
          <button v-for="name in extensions" :key="name" type="button" :aria-label="name"><Icon :name="name" /></button>
        </div>
        <button type="button" class="app-menu" aria-label="Menu"><Icon name="menu" :size="15" /></button>
      </div>

      <nav class="bookmarks">
        <a v-for="(mark, i) in bookmarks" :key="i" href="#" :style="{ width: mark.width + 'px' }">
          <Icon :name="mark.icon" :size="15" />
          <span :dir="mark.rtl ? 'rtl' : 'ltr'">{{ mark.title }}</span>
        </a>
        <button type="button" aria-label="More bookmarks"><Icon name="chevrons" :size="14" /></button>
      </nav>
    </header>

    <div class="viewport">
      <div class="page">
        <div class="admin-bar">
          <a href="#" aria-label="WordPress"><Icon name="wordpress" :size="18" /></a>
          <a href="#"><Icon name="home" />My Great Blog</a>
          <a href="#"><Icon name="update" />2</a>
          <a href="#" class="muted"><Icon name="comment" />0</a>
          <a href="#"><Icon name="plus" :size="15" />New</a>
          <a href="#" class="account">Howdy, admin<Icon name="avatar" /></a>
        </div>

        <div class="columns">
          <nav class="sidebar">
            <a href="#" class="item"><Icon name="dashboard" :size="18" />Dashboard</a>
            <div class="group content-group">
              <a v-for="item in contentMenu" :key="item.title" href="#" class="item"><Icon :name="item.icon" />{{ item.title }}</a>
            </div>
            <div class="group admin-group">
              <a v-for="item in adminMenu" :key="item.title" href="#" class="item">
                <Icon :name="item.icon" />{{ item.title }}<span v-if="item.count" class="count">{{ item.count }}</span>
              </a>
              <a href="#" class="item current"><Icon name="fields" />Custom Fields</a>
            </div>
            <div class="submenu">
              <a v-for="(title, i) in submenu" :key="title" href="#" :class="{ chosen: i === 0 }">{{ title }}</a>
            </div>
            <a href="#" class="item"><Icon name="brush" />Realtybloc</a>
            <div class="group last-group">
              <a href="#" class="item"><Icon name="hammer" />Import MLS</a>
              <a href="#" class="item"><Icon name="gear" />API (IDX)</a>
              <button type="button" class="item collapse"><Icon name="collapse" />Collapse menu</button>
            </div>
          </nav>

          <main>
            <div class="postbox">
              <div class="blank"></div>
              <div class="field-wrap">
                <section class="fields">
                  <div class="previous"></div>
                  <div class="field-row">
                    <div><span class="order">9</span></div>
                    <div><a href="#" class="title">Listing Sorting Options</a></div>
                    <div>listing_sorting</div>
                    <div>Select</div>
                  </div>
                  <div class="field-row open">
                    <div><span class="order">10</span></div>
                    <div>
                      <a href="#" class="title">Default Listing Filter cities</a>
                      <div class="actions">
                        <a href="#">Edit</a><a href="#">Duplicate</a><a href="#">Move</a><a href="#">Delete</a>
                      </div>
                    </div>
                    <div>listing_default_cities</div>
                    <div>Checkbox</div>
                  </div>

                  <form class="settings" @submit.prevent>
                    <div class="setting">
                      <div class="caption">
                        <label for="field-label">Field Label</label>
                        <p>This is the name which will appear on the EDIT page</p>
                      </div>
                      <div class="control"><input id="field-label" v-model="fieldLabel" type="text" /></div>
                    </div>
                    <div class="setting">
                      <div class="caption">
                        <label for="field-name">Field Name</label>
                        <p>Single word, no spaces. Underscores and dashes allowed</p>
                      </div>
                      <div class="control"><input id="field-name" v-model="fieldName" type="text" /></div>
                    </div>
                    <div class="setting">
                      <div class="caption"><label for="field-type">Field Type</label></div>
                      <div class="control">
                        <div class="select-box">
                          <select id="field-type" v-model="fieldType">
                            <option>Checkbox</option>
                            <option>Select</option>
                          </select>
                          <span class="drop"><Icon name="down" :size="9" /></span>
                        </div>
                      </div>
                    </div>
                    <div class="setting">
                      <div class="caption">
                        <label for="instructions">Instructions</label>
                        <p>Instructions for authors. Shown when submitting data</p>
                      </div>
                      <div class="control">
                        <div class="area-box">
                          <textarea id="instructions" v-model="instructions" class="short"></textarea>
                          <svg class="grip" viewBox="0 0 8 8" width="8" height="8"><path d="M6 0h2v2H6zM3 3h2v2H3zM6 3h2v2H6zM0 6h2v2H0zM3 6h2v2H3zM6 6h2v2H6z" /></svg>
                        </div>
                      </div>
                    </div>
                    <div class="setting">
                      <div class="caption"><label for="required">Required?</label></div>
                      <div class="control">
                        <label class="switch"><input id="required" v-model="required" type="checkbox" /><span>No</span></label>
                      </div>
                    </div>
                    <div class="setting">
                      <div class="caption">
                        <label for="choices">Choices</label>
                        <p>Enter each choice on a new line.<br /><br />For more control, you may specify both a value and label like this:<br /><br />red : Red</p>
                      </div>
                      <div class="control">
                        <div class="area-box">
                          <textarea id="choices" v-model="choices"></textarea>
                          <svg class="grip" viewBox="0 0 8 8" width="8" height="8"><path d="M6 0h2v2H6zM3 3h2v2H3zM6 3h2v2H6zM0 6h2v2H0zM3 6h2v2H3zM6 6h2v2H6z" /></svg>
                        </div>
                      </div>
                    </div>
                    <div class="setting">
                      <div class="caption"><label for="allow-custom">Allow Custom</label></div>
                      <div class="control">
                        <label class="switch"><input id="allow-custom" v-model="allowCustom" type="checkbox" /><span>No</span></label>
                        <span class="hint">Allow 'custom' values to be added</span>
                      </div>
                    </div>
                    <div class="setting">
                      <div class="caption">
                        <label for="default-value">Default Value</label>
                        <p>Enter each default value on a new line</p>
                      </div>
                      <div class="control">
                        <div class="area-box">
                          <textarea id="default-value" v-model="defaultValue"></textarea>
                          <svg class="grip" viewBox="0 0 8 8" width="8" height="8"><path d="M6 0h2v2H6zM3 3h2v2H3zM6 3h2v2H6zM0 6h2v2H0zM3 6h2v2H3zM6 6h2v2H6z" /></svg>
                        </div>
                      </div>
                    </div>
                  </form>
                </section>
              </div>
            </div>
            <svg class="arrow" viewBox="0 0 271 120" width="271" height="120">
              <path fill="#e00b0b" d="M0 48h199L124 0h53l94 60-94 60h-53l75-48H0z" />
            </svg>
          </main>
        </div>
      </div>

      <div class="scrollbar">
        <Icon name="up" :size="9" />
        <span class="thumb"></span>
        <Icon name="down" :size="9" />
      </div>
    </div>

    <footer class="taskbar">
      <button type="button" class="start" aria-label="Start"><Icon name="windows" /></button>
      <label class="search">
        <Icon name="search" />
        <input type="text" placeholder="Type here to search" aria-label="Search" />
      </label>
      <button type="button" class="app" aria-label="Task view"><Icon name="taskview" /></button>
      <button v-for="app in apps" :key="app.name" type="button" class="app" :class="app.state" :aria-label="app.name"><Icon :name="app.icon" :size="24" /></button>
      <div class="tray">
        <Icon name="chevup" :size="13" />
        <Icon name="battery" />
        <Icon name="wifi" :size="13" />
        <Icon name="volume" />
        <span class="lang">ENG</span>
        <time>8:28 AM<br />10/15/2019</time>
        <button type="button" class="notes" aria-label="Notifications"><Icon name="notes" /><span>2</span></button>
      </div>
    </footer>
  </div>
</template>

<style>
html,
body {
  margin: 0;
}
</style>

<style scoped>
* {
  box-sizing: border-box;
}
.desktop {
  display: flex;
  flex-direction: column;
  height: 100vh;
  overflow: hidden;
  font-family: "Noto Sans", "Open Sans", sans-serif;
  font-size: 12px;
  color: #444;
}
svg {
  flex: none;
  display: block;
}
a {
  color: inherit;
  text-decoration: none;
  white-space: nowrap;
}
button {
  display: flex;
  align-items: center;
  justify-content: center;
  padding: 0;
  border: 0;
  background: none;
  color: inherit;
  font: inherit;
}
p {
  margin: 0;
}

/* browser */
.browser {
  flex: none;
  background: #323234;
  color: #f9f9fa;
  font-family: "Open Sans", "DejaVu Sans", sans-serif;
  font-size: 11px;
}
.tabs {
  display: flex;
  height: 33px;
  background: #0c0c0d;
}
.strip {
  display: flex;
  width: calc(100% - 210px);
}
.tab {
  display: flex;
  flex: 1;
  align-items: center;
  gap: 7px;
  min-width: 0;
  padding: 2px 11px 0 10px;
  border-right: 1px solid #4a4a4c;
}
.tab.active {
  border-top: 2px solid #0a84ff;
  padding-top: 0;
  background: #323234;
}
.tab a {
  flex: 1;
  overflow: hidden;
}
.tab .fade {
  mask-image: linear-gradient(90deg, #000 65%, transparent);
}
.new-tab {
  width: 34px;
  color: #d0d0d2;
}
.window-controls {
  display: flex;
  margin-left: auto;
}
.window-controls button {
  width: 46px;
}
.toolbar {
  display: flex;
  align-items: center;
  height: 39px;
  padding-left: 5px;
  color: #d2d2d4;
}
.back {
  width: 30px;
  height: 30px;
  margin-right: 2px;
  border-radius: 50%;
  background: #4a4a4c;
  color: #8d8d8f;
}
.tool {
  width: 32px;
}
.dim {
  color: #7b7b7d;
}
.address {
  display: flex;
  flex: 1;
  align-items: center;
  gap: 7px;
  height: 30px;
  margin-left: 117px;
  padding-left: 7px;
  border: 1px solid #5a5a5c;
  border-radius: 2px;
  background: #474749;
  color: #c4c4c6;
}
.rule {
  width: 1px;
  height: 22px;
  background: #606063;
}
.address input {
  flex: 1;
  min-width: 0;
  padding: 0;
  border: 0;
  outline: 0;
  background: linear-gradient(90deg, #f9f9fa 56px, #a9a9ab 56px);
  background-clip: text;
  color: transparent;
  font: 13px "Open Sans", "Noto Sans", sans-serif;
}
.page-actions {
  display: flex;
  align-items: center;
}
.page-actions button {
  width: 28px;
}
.page-actions .zoom {
  width: 37px;
  height: 20px;
  margin: 0 12px 0 8px;
  border-radius: 10px;
  background: #525254;
  color: #f9f9fa;
}
.page-actions .rule + button {
  margin-left: 7px;
}
.extensions {
  display: flex;
  margin-left: 118px;
}
.extensions button {
  width: 32px;
}
.app-menu {
  width: 40px;
  height: 33px;
  margin-left: 4px;
  border-left: 1px solid #5a5a5c;
}
.bookmarks {
  display: flex;
  align-items: center;
  height: 24px;
  padding-left: 12px;
  border-bottom: 1px solid #0c0c0d;
}
.bookmarks a {
  display: flex;
  flex: 0 1 auto;
  align-items: center;
  gap: 6px;
  min-width: 0;
  overflow: hidden;
}
.bookmarks button {
  width: 34px;
  margin-left: auto;
}

/* admin page */
.viewport {
  display: flex;
  flex: 1;
  min-height: 0;
  background: #f1f1f1;
}
.page {
  display: flex;
  flex: 1;
  flex-direction: column;
  min-width: 0;
}
.admin-bar {
  display: flex;
  flex: none;
  align-items: center;
  gap: 12px;
  height: 29px;
  padding: 0 7px;
  background: #23282d;
  color: #eee;
}
.admin-bar a {
  display: flex;
  align-items: center;
  gap: 6px;
}
.admin-bar svg {
  color: #a0a5aa;
}
.admin-bar .muted {
  color: #a0a5aa;
}
.admin-bar .account {
  margin-left: auto;
}
.columns {
  display: flex;
  flex: 1;
  min-height: 0;
}
.sidebar {
  display: flex;
  flex: 0 0 143px;
  flex-direction: column;
  padding-top: 11px;
  overflow: hidden;
  background: #23282d;
  color: #eee;
}
.group {
  display: grid;
  grid-auto-rows: 1fr;
}
.content-group {
  height: 368px;
  margin: 10px 0;
}
.admin-group {
  height: 183px;
}
.last-group {
  height: 91px;
  margin-top: 11px;
}
.item {
  display: flex;
  align-items: center;
  justify-content: flex-start;
  gap: 8px;
  min-height: 30px;
  padding-left: 8px;
}
.item svg {
  width: 16px;
  color: #a0a5aa;
}
.count {
  width: 16px;
  height: 16px;
  border-radius: 8px;
  background: #ca4a1f;
  color: #fff;
  font-size: 9px;
  line-height: 16px;
  text-align: center;
}
.current {
  position: relative;
  background: #0073aa;
  color: #fff;
}
.current svg {
  color: #fff;
}
.current::after {
  content: "";
  position: absolute;
  right: 0;
  border: 7px solid transparent;
  border-left: 0;
  border-right-color: #f1f1f1;
}
.submenu {
  display: grid;
  padding: 7px 0 7px 11px;
  background: #32373c;
  color: #b4b9be;
  font-size: 11px;
  line-height: 25px;
}
.chosen {
  color: #fff;
  font-weight: 600;
}
.collapse {
  color: #a0a5aa;
}
main {
  position: relative;
  flex: 1;
  min-width: 0;
  padding: 0 287px 0 20px;
  overflow: hidden;
}
.postbox {
  display: grid;
  grid-template-columns: 20% 1fr;
  border: solid #ddd;
  border-width: 0 1px;
  background: #fff;
}
.blank {
  border-right: 1px solid #ddd;
  background: #f9f9f9;
}
.field-wrap {
  min-width: 0;
  padding: 0 10px 0 12px;
}
.fields {
  border: solid #dfdfdf;
  border-width: 0 1px;
  font-size: 11px;
}
.previous {
  height: 11px;
  border-bottom: 1px solid #eee;
}
.field-row {
  display: grid;
  grid-template-columns: 20% 30% 25% 25%;
  height: 48px;
  margin: 0 -1px;
  border: solid #dfdfdf;
  border-width: 0 1px;
  line-height: 18px;
}
.field-row > div {
  padding: 8px 0 0 13px;
}
.field-row.open {
  height: 51px;
  border-color: #2a9bd9;
  background: #2a9bd9;
  color: #fff;
}
.order {
  display: block;
  width: 28px;
  height: 28px;
  margin-top: 2px;
  border: 1px solid #bbb;
  border-radius: 50%;
  line-height: 26px;
  text-align: center;
}
.open .order {
  border-color: #fff;
}
.title {
  display: block;
  color: #0073aa;
  font-size: 12px;
  font-weight: 600;
}
.open .title {
  color: #fff;
}
.actions {
  display: flex;
  gap: 7px;
  line-height: 16px;
}
.setting {
  display: grid;
  grid-template-columns: 20% 1fr;
  border-bottom: 1px solid #eee;
}
.caption {
  padding: 14px 11px 13px;
  border-right: 1px solid #e1e1e1;
  background: #f9f9f9;
  color: #666;
  line-height: 16px;
}
.caption label {
  display: block;
  color: #333;
  font-weight: 700;
}
.caption p {
  margin-top: 3px;
}
.control {
  display: flex;
  align-items: flex-start;
  padding: 14px 11px 13px;
}
.control input[type="text"],
.control select,
.control textarea {
  width: 100%;
  height: 25px;
  padding: 0 5px;
  border: 1px solid #ddd;
  border-radius: 0;
  outline: 0;
  background: #fff;
  box-shadow: inset 0 1px 2px rgba(0, 0, 0, 0.07);
  color: #32373c;
  font: 12px "Noto Sans", "Open Sans", sans-serif;
}
.control select {
  appearance: none;
}
.control textarea {
  display: block;
  height: 164px;
  resize: none;
}
.control textarea.short {
  height: 112px;
}
.select-box,
.area-box {
  position: relative;
  width: 100%;
}
.drop {
  position: absolute;
  top: 1px;
  right: 1px;
  display: flex;
  align-items: center;
  justify-content: center;
  width: 17px;
  height: 23px;
  border: 1px solid #adadad;
  background: #e1e1e1;
  pointer-events: none;
}
.grip {
  position: absolute;
  right: 4px;
  bottom: 3px;
  fill: #b9b9b9;
}
.switch {
  display: flex;
  align-items: center;
  width: 72px;
  height: 29px;
  padding: 2px;
  border: 1px solid #ccc;
  border-radius: 4px;
  background: #f9f9f9;
  font-size: 12px;
}
.switch input {
  appearance: none;
  width: 34px;
  height: 23px;
  margin: 0;
  border: 1px solid #ccc;
  border-radius: 2px;
  background: #fff;
}
.switch span {
  flex: 1;
  text-align: center;
}
.hint {
  margin-left: 9px;
  line-height: 26px;
}
.arrow {
  position: absolute;
  top: 523px;
  left: 156px;
}
.scrollbar {
  display: flex;
  flex: 0 0 17px;
  flex-direction: column;
  align-items: center;
  padding: 5px 1px 4px;
  border-left: 1px solid #fff;
  background: #f0f0f0;
  color: #505050;
}
.thumb {
  width: 100%;
  height: 20%;
  margin: 243px 0 auto;
  background: #cdcdcd;
}

/* taskbar */
.taskbar {
  display: flex;
  flex: none;
  height: 40px;
  background: linear-gradient(90deg, #344544, #2a393b 30%, #262b2b 60%, #2f3331 85%, #26343b);
  color: #fff;
}
.start {
  width: 48px;
}
.search {
  display: flex;
  align-items: center;
  gap: 11px;
  width: 344px;
  padding-left: 12px;
  border: 1px solid #bdbdbd;
  background: #f1f1f1;
  color: #111;
}
.search input {
  flex: 1;
  min-width: 0;
  padding: 0;
  border: 0;
  outline: 0;
  background: none;
  font: 14px "Open Sans", "Noto Sans", sans-serif;
}
.search input::placeholder {
  color: #333;
}
.app {
  width: 49px;
  border: solid transparent;
  border-width: 2px 0;
}
.app.open {
  background: linear-gradient(#76b9ed, #76b9ed) bottom / 40px 2px no-repeat border-box;
}
.app.focused {
  border-bottom-color: #76b9ed;
  background: #566361;
}
.tray {
  display: flex;
  align-items: center;
  gap: 10px;
  margin-left: auto;
  font-family: "Open Sans", "Noto Sans", sans-serif;
  font-size: 11px;
}
time {
  line-height: 18px;
  text-align: center;
}
.notes {
  position: relative;
  justify-content: flex-start;
  width: 42px;
  height: 40px;
  margin-right: 3px;
  padding-left: 4px;
  border-right: 1px solid #6d777a;
}
.notes span {
  position: absolute;
  right: 14px;
  bottom: 4px;
  width: 16px;
  height: 16px;
  border: 1px solid #8c9496;
  border-radius: 50%;
  background: #2b3337;
  line-height: 14px;
}
</style>
